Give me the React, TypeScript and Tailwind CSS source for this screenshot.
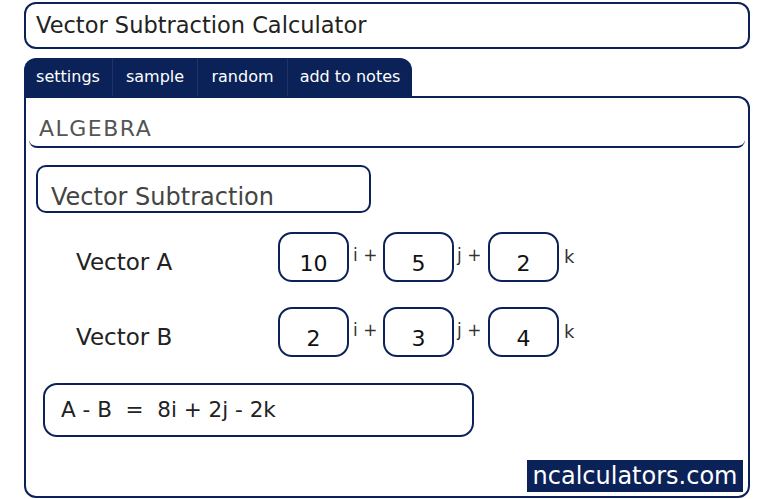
import React from "react"

const font = { fontFamily: '"DejaVu Sans", "Noto Sans", sans-serif' }

function NumBox({ value }: { value: string }) {
  return (
    <div className="flex h-[50px] w-[71px] items-end justify-center rounded-[14px] border-2 border-[#0b2259] pb-[5px] text-[22px] leading-[22px] text-[#111]">
      {value}
    </div>
  )
}

function VectorRow({ label, values }: { label: string; values: string[] }) {
  return (
    <div className="flex items-center">
      <div className="w-[252px] pl-[50px] pt-[10px] text-[23px] text-[#222]">{label}</div>
      <NumBox value={values[0]} />
      <span className="w-[34px] pb-[2px] pl-[4px] text-[17px] text-[#333]">i +</span>
      <NumBox value={values[1]} />
      <span className="w-[34px] pb-[2px] pl-[3px] text-[17px] text-[#333]">j +</span>
      <NumBox value={values[2]} />
      <span className="pb-[2px] pl-[5px] text-[18px] text-[#333]">k</span>
    </div>
  )
}

const tabs = [
  { label: "settings", w: "w-[89px]" },
  { label: "sample", w: "w-[85px]" },
  { label: "random", w: "w-[90px]" },
  { label: "add to notes", w: "w-[124px]" },
]

export default function App() {
  return (
    <div className="h-[499px] w-[770px] overflow-hidden bg-white pt-[2px]" style={font}>
      <div className="ml-[24px] flex h-[47px] w-[726px] items-center rounded-[12px] border-2 border-[#0b2259] px-[10px] text-[22.5px] text-[#222]">
        Vector Subtraction Calculator
      </div>

      <div className="ml-[24px] mt-[9px] flex h-[38px] w-fit rounded-t-[12px] bg-[#0b2259] text-[16px] text-white">
        {tabs.map((t, i) => (
          <div
            key={t.label}
            className={
              t.w +
              " flex items-center justify-center " +
              (i < tabs.length - 1 ? "border-r border-[#1f3368]" : "")
            }
          >
            {t.label}
          </div>
        ))}
      </div>

      <div className="ml-[24px] flex h-[402px] w-[726px] flex-col rounded-tr-[12px] rounded-b-[12px] border-2 border-[#0b2259]">
        <div className="mx-[3px] mt-[10px] flex h-[40px] items-center rounded-b-[8px] border-b-2 border-[#0b2259] pl-[10px] pt-[2px] text-[22px] tracking-[1.5px] text-[#555]">
          ALGEBRA
        </div>

        <div className="ml-[10px] mt-[17px] flex h-[48px] w-[335px] items-end rounded-[10px] border-2 border-[#0b2259] pb-[2px] pl-[13px] text-[24px] leading-[24px] text-[#444]">
          Vector Subtraction
        </div>

        <div className="mt-[19px] flex flex-col gap-[25px]">
          <VectorRow label="Vector A" values={["10", "5", "2"]} />
          <VectorRow label="Vector B" values={["2", "3", "4"]} />
        </div>

        <div className="ml-[17px] mt-[26px] flex h-[54px] w-[431px] items-center rounded-[14px] border-2 border-[#0b2259] pl-[16px] text-[21.5px] text-[#222]">
          A - B &nbsp;= &nbsp;8i + 2j - 2k
        </div>

        <div className="mb-[4px] mr-[5px] mt-auto flex h-[32px] w-[216px] items-center justify-center self-end bg-[#0b2259] text-[24px] text-white">
          ncalculators.com
        </div>
      </div>
    </div>
  )
}
